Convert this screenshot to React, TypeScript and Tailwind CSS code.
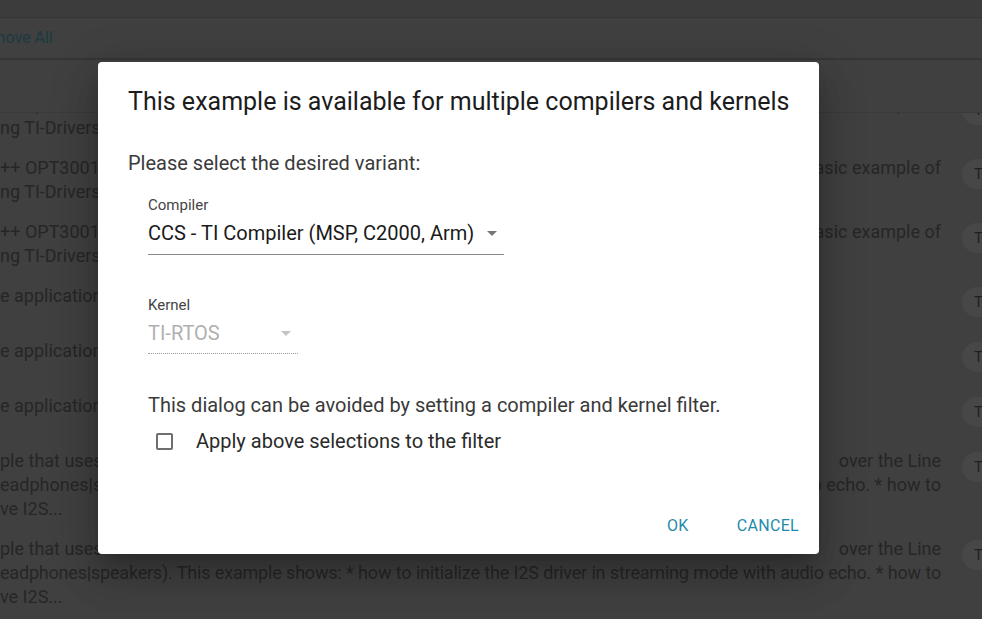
import { useState } from 'react';

const rows = [
  { lines: [['sample using TI-Drivers in', 'a basic example of'], ['ng TI-Drivers in', '']] },
  { lines: [['++ OPT3001 sensor example', 'asic example of'], ['ng TI-Drivers in', '']] },
  { lines: [['++ OPT3001 sensor example', 'asic example of'], ['ng TI-Drivers in', '']] },
  { lines: [['e application', '']] },
  { lines: [['e application', '']] },
  { lines: [['e application', '']] },
  {
    lines: [
      ['ple that uses', 'over the Line'],
      ['eadphones|sp', 'o echo. * how to'],
      ['ve I2S...', ''],
    ],
  },
  {
    lines: [
      ['ple that uses', 'over the Line'],
      ['eadphones|speakers). This example shows: * how to initialize the I2S driver in streaming mode with audio echo. * how to', ''],
      ['ve I2S...', ''],
    ],
  },
];

function Caret({ muted }: { muted?: boolean }) {
  return (
    <svg width="10" height="5" viewBox="0 0 10 5" className="shrink-0">
      <path d="M0 0 L10 0 L5 5 Z" fill={muted ? '#c4c4c4' : '#767676'} />
    </svg>
  );
}

export default function App() {
  const [applyFilter, setApplyFilter] = useState(false);

  return (
    <div className="relative h-[619px] w-[982px] overflow-hidden bg-[#404040] font-['Roboto','Liberation_Sans',sans-serif]">
      {/* page behind the dialog */}
      <div className="flex h-full flex-col">
        <div className="h-[18px] shrink-0 border-b border-[#363636] bg-[#3c3c3c]" />
        <div className="flex h-[42px] shrink-0 items-center border-b-2 border-[#363636] bg-[#404040]">
          <span className="-ml-[27px] text-[16px] text-[#1b3a42]">Remove All</span>
        </div>
        <div className="h-[53px] shrink-0 border-b border-[#3a3a3a]" />
        <div className="flex-1 overflow-hidden">
          <div className="-mt-[29px] flex flex-col">
            {rows.map((row, i) => (
              <div key={i} className="flex items-start py-2">
                <div className="w-[941px] shrink-0 text-[18px] leading-[24px] text-[#262626]">
                  {row.lines.map(([left, right], j) =>
                    left.length > 60 ? (
                      <div key={j} className="whitespace-nowrap text-justify tracking-[-0.2px] [text-align-last:justify]">
                        {left}
                      </div>
                    ) : (
                      <div key={j} className="flex justify-between whitespace-nowrap">
                        <span>{left}</span>
                        <span>{right}</span>
                      </div>
                    )
                  )}
                </div>
                <div className="ml-[21px] min-h-[39px] pt-[3px]">
                  <div className="flex h-[30px] w-[40px] items-center rounded-full bg-[#474747] pl-[12px] text-[15px] text-[#1f1f1f]">
                    T
                  </div>
                </div>
              </div>
            ))}
          </div>
        </div>
      </div>

      {/* dialog */}
      <div className="absolute left-[98px] top-[62px] flex h-[492px] w-[721px] flex-col rounded-[4px] bg-white shadow-[0_11px_15px_-7px_rgba(0,0,0,0.2),0_24px_38px_3px_rgba(0,0,0,0.14),0_9px_46px_8px_rgba(0,0,0,0.12)]">
        <h2 className="whitespace-nowrap pl-[30px] pr-[20px] pt-[24px] text-[25px] leading-[32px] text-[#1c1c1c]">
          This example is available for multiple compilers and kernels
        </h2>
        <div className="flex flex-1 flex-col px-[30px] pt-[31px]">
          <p className="text-[20px] leading-[28px] text-[#3a3a3a]">Please select the desired variant:</p>

          <div className="ml-[20px] mt-[18px] flex w-[356px] flex-col">
            <label className="text-[15px] leading-[20px] text-[#444]">Compiler</label>
            <div className="mt-[4px] flex items-center justify-between border-b border-[#8a8a8a] pb-[7px]">
              <span className="text-[20px] leading-[28px] text-[#1a1a1a]">CCS - TI Compiler (MSP, C2000, Arm)</span>
              <span className="mr-[7px]">
                <Caret />
              </span>
            </div>
          </div>

          <div className="ml-[20px] mt-[40px] flex w-[150px] flex-col">
            <label className="text-[15px] leading-[20px] text-[#444]">Kernel</label>
            <div className="mt-[4px] flex items-center justify-between border-b border-dotted border-[#9a9a9a] pb-[6px]">
              <span className="text-[20px] leading-[28px] text-[#b0b0b0]">TI-RTOS</span>
              <span className="mr-[7px]">
                <Caret muted />
              </span>
            </div>
          </div>

          <p className="ml-[20px] mt-[37px] text-[20px] leading-[28px] text-[#3a3a3a]">
            This dialog can be avoided by setting a compiler and kernel filter.
          </p>
          <label className="ml-[28px] mt-[8px] flex cursor-pointer items-center">
            <input
              type="checkbox"
              checked={applyFilter}
              onChange={() => setApplyFilter(!applyFilter)}
              className="h-[17px] w-[17px] appearance-none rounded-[2px] border-2 border-[#6e6e6e] checked:bg-[#1f8bab]"
            />
            <span className="ml-[23px] text-[20px] leading-[28px] text-[#2a2a2a]">Apply above selections to the filter</span>
          </label>
        </div>
        <div className="flex justify-end gap-[19px] px-[12px] pb-[10px]">
          <button className="min-w-[64px] px-[8px] py-[6px] text-[16px] leading-[24px] tracking-[0.3px] text-[#1f8bab]">OK</button>
          <button className="min-w-[64px] px-[8px] py-[6px] text-[16px] leading-[24px] tracking-[0.3px] text-[#1f8bab]">CANCEL</button>
        </div>
      </div>
    </div>
  );
}
